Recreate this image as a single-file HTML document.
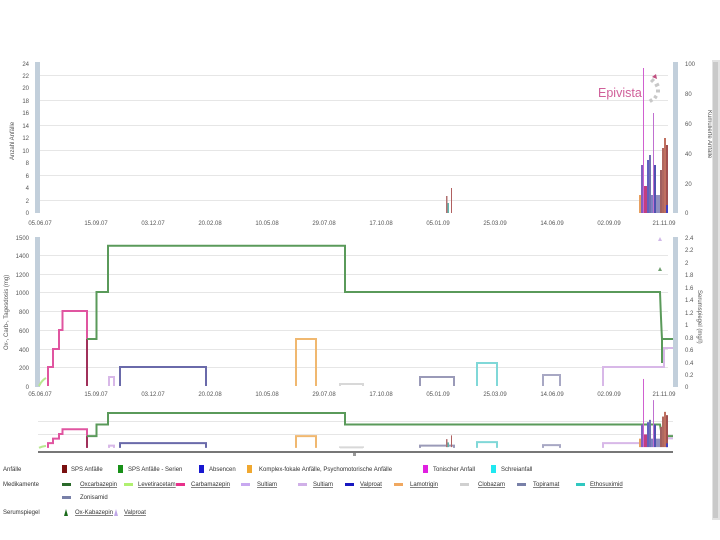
<!DOCTYPE html>
<html><head><meta charset="utf-8"><style>
html,body{margin:0;padding:0;background:#fff;width:720px;height:540px;overflow:hidden;font-family:"Liberation Sans",sans-serif;}
svg{position:absolute;left:0;top:0}
.t{font-size:6px;fill:#555}
.lg{font-size:6px;fill:#333}
.u{text-decoration:underline}
</style></head><body>
<svg width="720" height="540" viewBox="0 0 720 540">
<defs>
<g id="mid" fill="none" stroke-width="2" vector-effect="non-scaling-stroke">
 <path d="M39 386 Q42 380 46 378" stroke="#b8e890" vector-effect="non-scaling-stroke"/>
 <path d="M48 386V367H53V349H59V330H62.5V311H87V386" stroke="#e055a0" vector-effect="non-scaling-stroke"/>
 <path d="M87 339V386" stroke="#a0305a" vector-effect="non-scaling-stroke"/>
 <path d="M109 386V377H114V386" stroke="#d8b8e8" vector-effect="non-scaling-stroke"/>
 <path d="M120 386V367H206V386" stroke="#6a6aaa" vector-effect="non-scaling-stroke"/>
 <path d="M296 386V339H316V386" stroke="#f0b870" vector-effect="non-scaling-stroke"/>
 <path d="M340 386V384H363V386" stroke="#d8d8d8" vector-effect="non-scaling-stroke"/>
 <path d="M420 386V377H454V386" stroke="#9a9ab8" vector-effect="non-scaling-stroke"/>
 <path d="M477 386V363H497V386" stroke="#80d8d8" vector-effect="non-scaling-stroke"/>
 <path d="M543 386V375H560V386" stroke="#a8a8c4" vector-effect="non-scaling-stroke"/>
 <path d="M603 386V367H664V348H673" stroke="#d8b8e8" vector-effect="non-scaling-stroke"/>
 <path d="M87 339H96.5V292H108V245.7H345V292H660Q661 320 662 339H673M662 339V363" stroke="#5a9a5a" vector-effect="non-scaling-stroke"/>
</g>
<g id="bars">
 <rect x="447" y="203" width="2" height="10" fill="#60b8b0"/>
 <rect x="446" y="196" width="1.5" height="17" fill="#b07070"/>
 <rect x="451" y="188" width="1" height="25" fill="#b06060"/>
 <rect x="639" y="195" width="2" height="18" fill="#e8a060"/>
 <rect x="641" y="165" width="2" height="48" fill="#8060c0"/>
 <rect x="643" y="68" width="1" height="145" fill="#d060d0"/>
 <rect x="644" y="186" width="3" height="27" fill="#c04080"/>
 <rect x="647" y="160" width="2" height="53" fill="#6060c0"/>
 <rect x="649" y="155" width="2" height="58" fill="#7070b0"/>
 <rect x="651" y="195" width="2" height="18" fill="#8080c0"/>
 <rect x="653" y="113" width="1" height="100" fill="#c070d0"/>
 <rect x="654" y="165" width="2" height="48" fill="#5050b0"/>
 <rect x="656" y="195" width="4" height="18" fill="#9090c0"/>
 <rect x="660" y="170" width="2" height="43" fill="#a06060"/>
 <rect x="662" y="148" width="2" height="65" fill="#b06860"/>
 <rect x="664" y="138" width="2" height="75" fill="#c07060"/>
 <rect x="666" y="145" width="2" height="68" fill="#a05050"/>
 <rect x="666" y="205" width="2" height="8" fill="#4040c0"/>
</g>
</defs>

<!-- top chart -->
<g stroke="#e6e6e6" stroke-width="1">
 <line x1="40" x2="668" y1="75.5" y2="75.5"/><line x1="40" x2="668" y1="100.5" y2="100.5"/>
 <line x1="40" x2="668" y1="125.5" y2="125.5"/><line x1="40" x2="668" y1="150.5" y2="150.5"/>
 <line x1="40" x2="668" y1="175.5" y2="175.5"/><line x1="40" x2="668" y1="200.5" y2="200.5"/>
</g>
<rect x="35" y="62" width="5" height="151" fill="#c2cfdb"/>
<rect x="673" y="62" width="5" height="151" fill="#c2cfdb"/>
<g class="t" text-anchor="end">
 <text x="29" y="66">24</text><text x="29" y="78">22</text><text x="29" y="90">20</text><text x="29" y="103">18</text>
 <text x="29" y="115">16</text><text x="29" y="128">14</text><text x="29" y="140">12</text><text x="29" y="153">10</text>
 <text x="29" y="165">8</text><text x="29" y="178">6</text><text x="29" y="190">4</text><text x="29" y="203">2</text><text x="29" y="215">0</text>
</g>
<text class="t" transform="translate(14,160) rotate(-90)">Anzahl Anfälle</text>
<g class="t">
 <text x="685" y="66">100</text><text x="685" y="96">80</text><text x="685" y="126">60</text><text x="685" y="156">40</text><text x="685" y="186">20</text><text x="685" y="215">0</text>
</g>
<text class="t" transform="translate(708,110) rotate(90)">Kumulierte Anfälle</text>
<use href="#bars"/>
<text x="598" y="97" font-size="12.5" fill="#d0609a" font-family="Liberation Sans">Epivista</text>
<g stroke="#c8c8c8" stroke-width="3" fill="none">
 <path d="M651 82l3 -3M655 86l4 -2M656 91h4M654 96l3 2M650 99l2 3"/>
</g>
<path d="M652 77l4 -3 1 5z" fill="#c05080"/>
<g class="t" text-anchor="middle">
 <text x="40" y="225">05.06.07</text><text x="96" y="225">15.09.07</text><text x="153" y="225">03.12.07</text><text x="210" y="225">20.02.08</text>
 <text x="267" y="225">10.05.08</text><text x="324" y="225">29.07.08</text><text x="381" y="225">17.10.08</text><text x="438" y="225">05.01.09</text>
 <text x="495" y="225">25.03.09</text><text x="552" y="225">14.06.09</text><text x="609" y="225">02.09.09</text><text x="664" y="225">21.11.09</text>
</g>

<!-- middle chart -->
<g stroke="#e6e6e6" stroke-width="1">
 <line x1="40" x2="668" y1="255.5" y2="255.5"/><line x1="40" x2="668" y1="274.5" y2="274.5"/>
 <line x1="40" x2="668" y1="292.5" y2="292.5"/><line x1="40" x2="668" y1="311.5" y2="311.5"/>
 <line x1="40" x2="668" y1="330.5" y2="330.5"/><line x1="40" x2="668" y1="349.5" y2="349.5"/>
 <line x1="40" x2="668" y1="367.5" y2="367.5"/>
</g>
<rect x="35" y="237" width="5" height="150" fill="#c2cfdb"/>
<rect x="673" y="237" width="5" height="150" fill="#c2cfdb"/>
<g class="t" text-anchor="end">
 <text x="29" y="240">1500</text><text x="29" y="258">1400</text><text x="29" y="277">1200</text><text x="29" y="295">1000</text>
 <text x="29" y="314">800</text><text x="29" y="333">600</text><text x="29" y="352">400</text><text x="29" y="370">200</text><text x="29" y="389">0</text>
</g>
<text class="t" transform="translate(8,350) rotate(-90)">Ox-, Carb-, Tagesdosis (mg)</text>
<g class="t">
 <text x="685" y="240">2.4</text><text x="685" y="252">2.2</text><text x="685" y="265">2</text><text x="685" y="277">1.8</text>
 <text x="685" y="290">1.6</text><text x="685" y="302">1.4</text><text x="685" y="315">1.2</text><text x="685" y="327">1</text>
 <text x="685" y="340">0.8</text><text x="685" y="352">0.6</text><text x="685" y="365">0.4</text><text x="685" y="377">0.2</text><text x="685" y="389">0</text>
</g>
<text class="t" transform="translate(698,290) rotate(90)">Serumspiegel (mg/l)</text>
<use href="#mid"/>
<path d="M660 237l2 4h-4z" fill="#d0b8e8"/>
<path d="M660 267l2 4h-4z" fill="#70a070"/>
<g class="t" text-anchor="middle">
 <text x="40" y="396">05.06.07</text><text x="96" y="396">15.09.07</text><text x="153" y="396">03.12.07</text><text x="210" y="396">20.02.08</text>
 <text x="267" y="396">10.05.08</text><text x="324" y="396">29.07.08</text><text x="381" y="396">17.10.08</text><text x="438" y="396">05.01.09</text>
 <text x="495" y="396">25.03.09</text><text x="552" y="396">14.06.09</text><text x="609" y="396">02.09.09</text><text x="664" y="396">21.11.09</text>
</g>

<!-- navigator -->
<g stroke="#e6e6e6"><line x1="38" x2="673" y1="421.5" y2="421.5"/><line x1="38" x2="673" y1="434.5" y2="434.5"/></g>
<g transform="translate(0,352.1) scale(1,0.248)"><use href="#mid"/></g>
<g transform="translate(0,347) scale(1,0.47)"><use href="#bars"/></g>
<rect x="38" y="451" width="635" height="2" fill="#777"/>
<rect x="353" y="453" width="3" height="3" fill="#999"/>

<!-- scrollbar -->
<rect x="712" y="60" width="8" height="460" fill="#e2e2e2"/>
<rect x="713" y="62" width="5" height="456" fill="#c9c9c9"/>

<!-- legend -->
<g class="lg">
 <text x="3" y="471">Anfälle</text>
 <rect x="62" y="465" width="5" height="8" fill="#7a1010"/><text x="71" y="471">SPS Anfälle</text>
 <rect x="118" y="465" width="5" height="8" fill="#189018"/><text x="128" y="471">SPS Anfälle - Serien</text>
 <rect x="199" y="465" width="5" height="8" fill="#1818d0"/><text x="209" y="471">Absencen</text>
 <rect x="247" y="465" width="5" height="8" fill="#f0a830"/><text x="259" y="471">Komplex-fokale Anfälle, Psychomotorische Anfälle</text>
 <rect x="423" y="465" width="5" height="8" fill="#e020e0"/><text x="433" y="471">Tonischer Anfall</text>
 <rect x="491" y="465" width="5" height="8" fill="#20e8f0"/><text x="501" y="471">Schreianfall</text>

 <text x="3" y="486">Medikamente</text>
 <rect x="62" y="483" width="9" height="3" fill="#2a6a2a"/><text x="80" y="486" class="u">Oxcarbazepin</text>
 <rect x="124" y="483" width="9" height="3" fill="#b0f070"/><text x="138" y="486" class="u">Levetiracetam</text>
 <rect x="176" y="483" width="9" height="3" fill="#e8308a"/><text x="191" y="486" class="u">Carbamazepin</text>
 <rect x="241" y="483" width="9" height="3" fill="#c8a8f0"/><text x="257" y="486" class="u">Sultiam</text>
 <rect x="298" y="483" width="9" height="3" fill="#d0b0e8"/><text x="313" y="486" class="u">Sultiam</text>
 <rect x="345" y="483" width="9" height="3" fill="#1818c0"/><text x="360" y="486" class="u">Valproat</text>
 <rect x="394" y="483" width="9" height="3" fill="#f0a860"/><text x="410" y="486" class="u">Lamotrigin</text>
 <rect x="460" y="483" width="9" height="3" fill="#d0d0d0"/><text x="478" y="486" class="u">Clobazam</text>
 <rect x="517" y="483" width="9" height="3" fill="#7880a8"/><text x="533" y="486" class="u">Topiramat</text>
 <rect x="576" y="483" width="9" height="3" fill="#30c8c0"/><text x="590" y="486" class="u">Ethosuximid</text>

 <rect x="62" y="496" width="9" height="3" fill="#7880a8"/><text x="80" y="499">Zonisamid</text>

 <text x="3" y="514">Serumspiegel</text>
 <path d="M66 509l2 7h-4z" fill="#1a6a1a"/><text x="75" y="514" class="u">Ox-Kabazepin</text>
 <path d="M116 509l2 7h-4z" fill="#c0a8e8"/><text x="124" y="514" class="u">Valproat</text>
</g>
</svg>
</body></html>
